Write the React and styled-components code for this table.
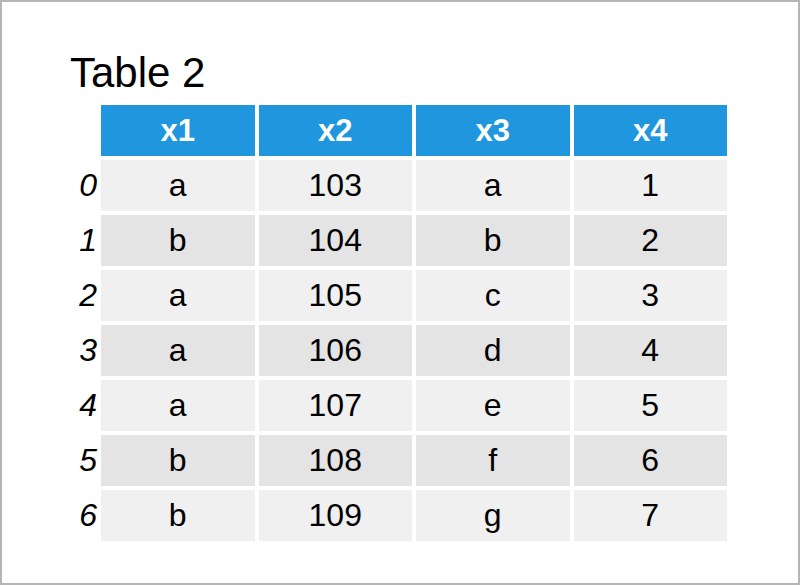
import React from "react";
import styled, { createGlobalStyle } from "styled-components";

const Global = createGlobalStyle`
  html, body { margin: 0; padding: 0; background: #ffffff; }
  body { font-family: "Liberation Sans", Arial, Helvetica, sans-serif; }
`;

const Frame = styled.div`
  box-sizing: border-box;
  width: 800px;
  height: 585px;
  border: 2px solid #b5b5b5;
  background: #ffffff;
  padding: 47px 0 0 64px;
  display: flex;
  flex-direction: column;
`;

const Title = styled.h1`
  margin: 0 0 9px 4px;
  font-size: 42px;
  line-height: 47px;
  font-weight: 400;
  color: #000000;
`;

const Grid = styled.div`
  display: grid;
  grid-template-columns: 31px repeat(4, 153.5px);
  grid-auto-rows: 51px;
  column-gap: 4px;
  row-gap: 4px;
`;

const Corner = styled.div``;

const HeadCell = styled.div`
  background: #1f96dd;
  color: #ffffff;
  font-weight: 700;
  font-size: 31px;
  display: flex;
  align-items: center;
  justify-content: center;
`;

const IndexCell = styled.div`
  font-style: italic;
  font-size: 32px;
  color: #000000;
  display: flex;
  align-items: center;
  justify-content: flex-end;
`;

const Cell = styled.div`
  background: ${(p) => (p.$odd ? "#e4e4e4" : "#f0f0f0")};
  color: #000000;
  font-size: 32px;
  display: flex;
  align-items: center;
  justify-content: center;
`;

const columns = ["x1", "x2", "x3", "x4"];
const rows = [
  ["a", "103", "a", "1"],
  ["b", "104", "b", "2"],
  ["a", "105", "c", "3"],
  ["a", "106", "d", "4"],
  ["a", "107", "e", "5"],
  ["b", "108", "f", "6"],
  ["b", "109", "g", "7"],
];

export default function App() {
  return (
    <>
      <Global />
      <Frame>
        <Title>Table 2</Title>
        <Grid>
          <Corner />
          {columns.map((c) => (
            <HeadCell key={c}>{c}</HeadCell>
          ))}
          {rows.map((r, i) => (
            <React.Fragment key={i}>
              <IndexCell>{i}</IndexCell>
              {r.map((v, j) => (
                <Cell key={j} $odd={i % 2 === 1}>
                  {v}
                </Cell>
              ))}
            </React.Fragment>
          ))}
        </Grid>
      </Frame>
    </>
  );
}
